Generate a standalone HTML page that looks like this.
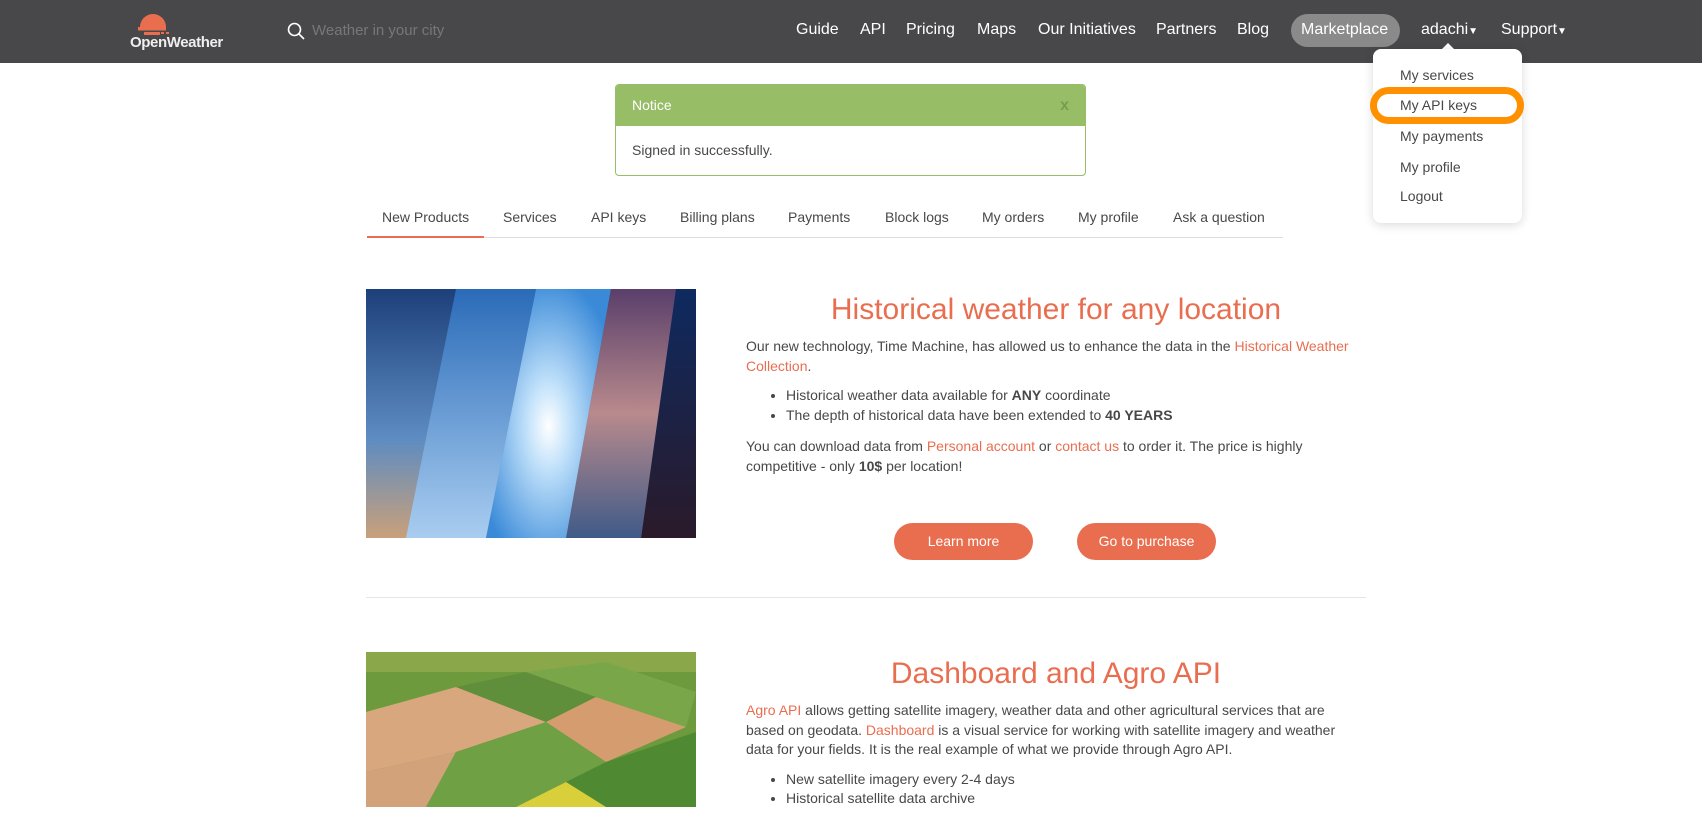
<!DOCTYPE html>
<html><head><meta charset="utf-8"><style>
*{box-sizing:border-box;margin:0;padding:0}
body{width:1702px;height:807px;overflow:hidden;background:#fff;font-family:"Liberation Sans",Arial,sans-serif;color:#48484a;position:relative}
.nav{position:absolute;left:0;top:0;width:1702px;height:63px;background:#48484a}
.nav .it{position:absolute;top:21px;font-size:16px;color:#fff}
.abs{position:absolute}
.dd{position:absolute;left:1373px;top:49px;width:149px;height:174px;background:#fff;border-radius:8px;box-shadow:0 2px 10px rgba(0,0,0,.15)}
.dd div{position:absolute;left:27px;font-size:14px;color:#48484a}
.notice{position:absolute;left:615px;top:84px;width:471px;height:92px;border:1px solid #97bd67;border-radius:4px;overflow:hidden}
.tab{position:absolute;top:209px;font-size:14px;color:#48484a}
.p{font-size:14px;line-height:19.5px;color:#48484a}
a{color:#e96e50;text-decoration:none}
.btn{position:absolute;top:523px;width:139px;height:37px;border-radius:19px;background:#e96e50;color:#fff;font-size:14px;text-align:center;line-height:37px}
h2{position:absolute;font-weight:normal;color:#e96e50;font-size:30px;text-align:center}
ul{padding-left:40px}
</style></head><body>
<div class="nav">
 <svg class="abs" style="left:134px;top:10px" width="40" height="28" viewBox="0 0 40 28">
  <path d="M6 17 A13 13 0 0 1 32 17 Z" fill="#e96e50"/>
  <rect x="4" y="17" width="28" height="3.5" fill="#e96e50"/>
  <rect x="10" y="22" width="16" height="3" fill="#e96e50"/>
  <rect x="27" y="22" width="3" height="2" fill="#e96e50"/><rect x="32" y="22" width="3" height="2" fill="#e96e50"/>
 </svg>
 <div class="abs" style="left:130px;top:34px;font-size:15px;font-weight:bold;color:#eee;letter-spacing:-0.4px">OpenWeather</div>
 <svg class="abs" style="left:287px;top:22px" width="18" height="18" viewBox="0 0 18 18"><circle cx="7.5" cy="7.5" r="6" fill="none" stroke="#fff" stroke-width="1.6"/><path d="M12 12 L17 17" stroke="#fff" stroke-width="1.6"/></svg>
 <div class="abs" style="left:312px;top:22px;font-size:15px;color:#777">Weather in your city</div>
 <div class="it" style="left:796px">Guide</div>
 <div class="it" style="left:860px">API</div>
 <div class="it" style="left:906px">Pricing</div>
 <div class="it" style="left:977px">Maps</div>
 <div class="it" style="left:1038px">Our Initiatives</div>
 <div class="it" style="left:1156px">Partners</div>
 <div class="it" style="left:1237px">Blog</div>
 <div class="abs" style="left:1291px;top:14px;width:109px;height:33px;border-radius:17px;background:#8a8a8a"></div>
 <div class="it" style="left:1301px">Marketplace</div>
 <div class="it" style="left:1421px">adachi<span style="font-size:10px">▼</span></div>
 <div class="it" style="left:1501px">Support<span style="font-size:10px">▼</span></div>
</div>
<div class="abs" style="left:1440px;top:43px;width:0;height:0;border-left:8px solid transparent;border-right:8px solid transparent;border-bottom:8px solid #fff"></div>
<div class="dd">
 <div style="top:18px">My services</div>
 <div style="top:48px">My API keys</div>
 <div style="top:79px">My payments</div>
 <div style="top:110px">My profile</div>
 <div style="top:139px">Logout</div>
</div>
<div class="abs" style="left:1370px;top:87px;width:154px;height:37px;border:7px solid #ff9000;border-radius:19px"></div>
<div class="notice">
 <div style="height:41px;background:#97bd67;color:#fff;font-size:14px;padding:12px 16px;position:relative">Notice<span style="position:absolute;right:16px;top:12px;color:#7a9c50;font-weight:bold;font-size:16px">x</span></div>
 <div style="padding:16px 16px;font-size:14px">Signed in successfully.</div>
</div>
<div class="abs" style="left:367px;top:237px;width:916px;height:1px;background:#ddd"></div>
<div class="abs" style="left:367px;top:236px;width:117px;height:2px;background:#e96e50"></div>
<div class="tab" style="left:382px">New Products</div>
<div class="tab" style="left:503px">Services</div>
<div class="tab" style="left:591px">API keys</div>
<div class="tab" style="left:680px">Billing plans</div>
<div class="tab" style="left:788px">Payments</div>
<div class="tab" style="left:885px">Block logs</div>
<div class="tab" style="left:982px">My orders</div>
<div class="tab" style="left:1078px">My profile</div>
<div class="tab" style="left:1173px">Ask a question</div>

<svg class="abs" style="left:366px;top:289px" width="330" height="249" viewBox="0 0 330 249">
 <defs>
  <linearGradient id="g1" x1="0" y1="0" x2="0" y2="1"><stop offset="0" stop-color="#1d3f7a"/><stop offset=".6" stop-color="#5d8cc2"/><stop offset="1" stop-color="#c9a07a"/></linearGradient>
  <linearGradient id="g2" x1="0" y1="0" x2="0" y2="1"><stop offset="0" stop-color="#2a6bb8"/><stop offset="1" stop-color="#a9cdf0"/></linearGradient>
  <radialGradient id="g3" cx=".5" cy=".55" r=".6"><stop offset="0" stop-color="#fff"/><stop offset=".3" stop-color="#bfe0fa"/><stop offset="1" stop-color="#3a8ad8"/></radialGradient>
  <linearGradient id="g4" x1="0" y1="0" x2="0" y2="1"><stop offset="0" stop-color="#5a3f6b"/><stop offset=".5" stop-color="#b88a8c"/><stop offset="1" stop-color="#405a88"/></linearGradient>
  <linearGradient id="g5" x1="0" y1="0" x2="0" y2="1"><stop offset="0" stop-color="#0e2a60"/><stop offset="1" stop-color="#2a1a2a"/></linearGradient>
 </defs>
 <rect width="330" height="249" fill="url(#g1)"/>
 <polygon points="90,0 170,0 120,249 40,249" fill="url(#g2)"/>
 <polygon points="170,0 245,0 200,249 120,249" fill="url(#g3)"/>
 <polygon points="245,0 310,0 275,249 200,249" fill="url(#g4)"/>
 <polygon points="310,0 330,0 330,249 275,249" fill="url(#g5)"/>
</svg>
<h2 style="left:746px;top:293px;width:620px">Historical weather for any location</h2>
<div class="abs p" style="left:746px;top:337px;width:620px">
 <p>Our new technology, Time Machine, has allowed us to enhance the data in the <a>Historical Weather Collection</a>.</p>
 <ul style="margin:10px 0 12px"><li>Historical weather data available for <b>ANY</b> coordinate</li><li>The depth of historical data have been extended to <b>40 YEARS</b></li></ul>
 <p>You can download data from <a>Personal account</a> or <a>contact us</a> to order it. The price is highly competitive - only <b>10$</b> per location!</p>
</div>
<div class="btn" style="left:894px">Learn more</div>
<div class="btn" style="left:1077px">Go to purchase</div>
<div class="abs" style="left:366px;top:597px;width:1000px;height:1px;background:#e6e6e6"></div>

<svg class="abs" style="left:366px;top:652px" width="330" height="155" viewBox="0 0 330 155">
 <rect width="330" height="155" fill="#6e9a3e"/>
 <rect width="330" height="20" fill="#8aa84a"/>
 <polygon points="0,60 90,35 180,70 90,100 0,120" fill="#d9a77e"/>
 <polygon points="90,35 160,20 230,45 180,70" fill="#5f8f3a"/>
 <polygon points="180,70 230,45 320,75 240,110" fill="#d59c70"/>
 <polygon points="0,120 90,100 60,155 0,155" fill="#d2a27a"/>
 <polygon points="90,100 180,70 240,110 150,155 60,155" fill="#6fa044"/>
 <polygon points="150,155 240,110 330,80 330,155" fill="#4f8a32"/>
 <polygon points="150,155 200,130 240,155" fill="#d9cf3a"/>
 <polygon points="160,20 240,10 330,40 320,75 230,45" fill="#7aa64a"/>
</svg>
<h2 style="left:746px;top:657px;width:620px">Dashboard and Agro API</h2>
<div class="abs p" style="left:746px;top:701px;width:620px">
 <p><a>Agro API</a> allows getting satellite imagery, weather data and other agricultural services that are based on geodata. <a>Dashboard</a> is a visual service for working with satellite imagery and weather data for your fields. It is the real example of what we provide through Agro API.</p>
 <ul style="margin:10px 0"><li>New satellite imagery every 2-4 days</li><li>Historical satellite data archive</li></ul>
</div>
</body></html>
